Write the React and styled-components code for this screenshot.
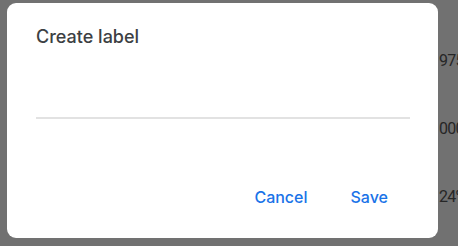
import React from 'react'
import styled, { createGlobalStyle } from 'styled-components'

const GlobalStyle = createGlobalStyle`
  html, body {
    margin: 0;
    padding: 0;
    background: #717171;
  }
  body {
    font-family: Inter, Roboto, "Liberation Sans", sans-serif;
  }
`

const Page = styled.div`
  position: relative;
  width: 458px;
  height: 246px;
  overflow: hidden;
  background: #717171;
`

const BackList = styled.div`
  padding-top: 26px;
  display: flex;
  flex-direction: column;
`

const BackRow = styled.div`
  height: 68px;
  display: flex;
  align-items: center;
  padding-left: 439px;
  white-space: nowrap;
  font-family: Roboto, "Liberation Sans", sans-serif;
  font-size: 16px;
  letter-spacing: -0.8px;
  color: #262626;
`

const Dialog = styled.div`
  position: absolute;
  left: 7px;
  top: 3px;
  width: 431px;
  height: 235px;
  box-sizing: border-box;
  background: #fff;
  border-radius: 9px;
  padding: 20px 28px 0 29px;
  display: flex;
  flex-direction: column;
`

const Title = styled.h2`
  margin: 0;
  font-family: Inter, Roboto, sans-serif;
  font-size: 18px;
  font-weight: 450;
  line-height: 28px;
  color: #3c4043;
`

const Field = styled.input`
  margin-top: 40px;
  height: 26px;
  border: none;
  border-bottom: 2px solid #e2e2e2;
  outline: none;
  padding: 0;
  font: inherit;
  font-size: 16px;
  background: transparent;
`

const Actions = styled.div`
  margin-top: 60px;
  display: flex;
  justify-content: flex-end;
  gap: 13px;
  padding-right: 7px;
`

const TextButton = styled.button`
  border: none;
  background: transparent;
  padding: 8px 15px;
  font-family: Inter, Roboto, sans-serif;
  font-size: 16px;
  font-weight: 500;
  color: #1a73e8;
  cursor: pointer;
`

export default function App() {
  return (
    <Page>
      <GlobalStyle />
      <BackList>
        <BackRow>975.00</BackRow>
        <BackRow>000.00</BackRow>
        <BackRow>24%</BackRow>
      </BackList>
      <Dialog>
        <Title>Create label</Title>
        <Field aria-label="Label name" />
        <Actions>
          <TextButton>Cancel</TextButton>
          <TextButton>Save</TextButton>
        </Actions>
      </Dialog>
    </Page>
  )
}
